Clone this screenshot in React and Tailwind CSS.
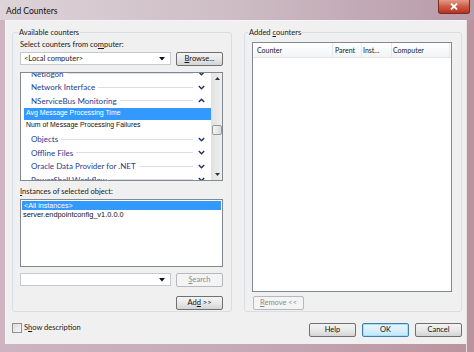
import React from 'react';

const Chevron = ({ up }) => (
  <svg width="7" height="5" viewBox="0 0 7 5" className="shrink-0">
    <path d={up ? 'M0.8 4 L3.5 1.3 L6.2 4' : 'M0.8 1 L3.5 3.7 L6.2 1'} fill="none" stroke="#1e2f6e" strokeWidth="1.4" />
  </svg>
);

const Button = ({ children, className = '', disabled, primary }) => (
  <div
    className={`h-[14px] flex items-center justify-center rounded-[2px] border text-[7.5px] ${
      disabled
        ? 'border-[#b5b9bd] bg-[#f4f4f4] text-[#8a8a8a]'
        : primary
        ? 'border-[#3c7fb1] bg-linear-to-b from-[#eaf6fd] via-[#d9effa] to-[#bee6fd] text-[#111] shadow-[inset_0_0_0_1px_#a6dcf7]'
        : 'border-[#707070] bg-linear-to-b from-[#f3f3f3] via-[#e9e9e9] to-[#d4d4d4] text-[#111]'
    } ${className}`}
  >
    <span className="whitespace-pre">{children}</span>
  </div>
);

const Category = ({ label, up }) => (
  <div className="h-[13.5px] flex items-center pl-[10px] pr-[6px] text-[8px] text-[#1f3b8f]">
    <span className="whitespace-nowrap">{label}</span>
    <div className="flex-1 h-px bg-[#d9e0ea] ml-[3px] mr-[5px]" />
    <Chevron up={up} />
  </div>
);

const Counter = ({ label, selected }) => (
  <div
    className={`h-[12px] flex items-center ml-[3px] pl-[2px] text-[6.9px] font-['Liberation_Sans',sans-serif] whitespace-nowrap ${
      selected ? 'bg-[#3399ff] text-white' : 'text-[#111]'
    }`}
  >
    {label}
  </div>
);

const Combo = ({ children, className = '' }) => (
  <div className={`flex items-center bg-white border border-[#c5c8cc] pl-[3px] pr-[5px] ${className}`}>
    <span className="flex-1 text-[7.5px] text-[#222] whitespace-nowrap">{children}</span>
    <svg width="6" height="4" viewBox="0 0 6 4"><path d="M0 0 H6 L3 3.5 Z" fill="#111" /></svg>
  </div>
);

export default function App() {
  return (
    <div className="w-[474px] h-[352px] overflow-hidden flex flex-col bg-linear-to-r from-[#cdb4c0] via-[#c6a9b7] to-[#b9949f] font-['Lato',sans-serif] text-[#1a1a1a]">
      {/* Title bar */}
      <div className="h-[20px] flex items-start bg-linear-to-r from-[#ddd3d8] via-[#cdbcc4] to-[#b89aa8]">
        <span className="text-[8.5px] ml-[6px] mt-[5px] text-[#111]">Add Counters</span>
        <div className="ml-auto mr-[4px] w-[32px] h-[14px] rounded-b-[3px] border border-t-0 border-[#7a2b22] bg-linear-to-b from-[#e29a8a] via-[#cf5a44] to-[#b7301d] flex items-center justify-center">
          <svg width="8" height="7" viewBox="0 0 8 7"><path d="M1 0.5 L7 6.5 M7 0.5 L1 6.5" stroke="#fff" strokeWidth="1.8" /></svg>
        </div>
      </div>

      <div className="flex flex-1">
        <div className="w-[5px]" />
        {/* Client area */}
        <div className="w-[461px] h-[324px] bg-[#f0f0f0] flex flex-col border-l border-t border-[#f8f4f6]">
          <div className="flex pl-[6px] pt-[11px]">
            {/* Available counters */}
            <div className="relative w-[220px] h-[280px] border border-[#d5dfe5] rounded-[3px] pl-[7px] pt-[7px]">
              <span className="absolute left-[5px] -top-[6px] px-[1px] bg-[#f0f0f0] text-[7.5px] leading-[11px]">Available counters</span>
              <div className="text-[7.5px] leading-[10px] h-[10px]">Select counters from co<u>m</u>puter:</div>
              <div className="flex items-start mt-[2px] h-[14px]">
                <Combo className="w-[151px] h-[13px]">&lt;Local computer&gt;</Combo>
                <Button className="w-[47px] ml-[5px]"><u>B</u>rowse...</Button>
              </div>
              <div className="mt-[6px] w-[203px] h-[109px] bg-white border border-[#828790] flex overflow-hidden">
                <div className="flex-1 overflow-hidden">
                  <div className="-mt-[6px]">
                    <Category label="Netlogon" />
                    <Category label="Network Interface" />
                    <Category label="NServiceBus Monitoring" up />
                    <Counter label="Avg Message Processing Time" selected />
                    <Counter label="Num of Message Processing Failures" />
                    <div className="h-[1px]" />
                    <Category label="Objects" />
                    <Category label="Offline Files" />
                    <Category label="Oracle Data Provider for .NET" />
                    <Category label="PowerShell Workflow" />
                  </div>
                </div>
                <div className="w-[11px] bg-linear-to-r from-[#e3e3e3] to-[#efefef] border-l border-[#e0e0e0] flex flex-col items-center">
                  <div className="h-[11px] flex items-center justify-center">
                    <svg width="5" height="3" viewBox="0 0 5 3"><path d="M0 3 L2.5 0 L5 3 Z" fill="#333" /></svg>
                  </div>
                  <div className="mt-[41px] w-[10px] h-[10px] rounded-[2px] border border-[#979797] bg-linear-to-r from-[#f4f4f4] to-[#dcdcdc]" />
                  <div className="flex-1" />
                  <div className="h-[11px] flex items-center justify-center">
                    <svg width="5" height="3" viewBox="0 0 5 3"><path d="M0 0 L5 0 L2.5 3 Z" fill="#333" /></svg>
                  </div>
                </div>
              </div>
              <div className="mt-[6px] text-[7.5px] leading-[10px] h-[10px]"><u>I</u>nstances of selected object:</div>
              <div className="mt-[2px] w-[203px] h-[68px] bg-white border border-[#828790] pt-[1px] pl-[1px] pr-[1px]">
                <div className="h-[9px] bg-[#3399ff] text-white text-[7.2px] leading-[9px] pl-[2px] font-['Liberation_Sans',sans-serif]">&lt;All instances&gt;</div>
                <div className="h-[10px] text-[7.4px] leading-[10px] pl-[1px] font-['Liberation_Sans',sans-serif] text-[#111]">server.endpointconfig_v1.0.0.0</div>
              </div>
              <div className="flex items-start mt-[6px]">
                <Combo className="w-[151px] h-[13px]" />
                <Button disabled className="w-[47px] ml-[5px]"><u>S</u>earch</Button>
              </div>
              <div className="flex mt-[9px]">
                <Button className="w-[47px] ml-[156px]">Ad<u>d</u> &gt;&gt;</Button>
              </div>
            </div>

            {/* Added counters */}
            <div className="relative ml-[12px] w-[218px] h-[280px] border border-[#d5dfe5] rounded-[3px] pl-[7px] pt-[9px]">
              <span className="absolute left-[3px] -top-[6px] px-[1px] bg-[#f0f0f0] text-[7.5px] leading-[11px]">Added <u>c</u>ounters</span>
              <div className="w-[200px] h-[250px] bg-white border border-[#828790]">
                <div className="h-[15px] flex items-center text-[7px] bg-linear-to-b from-white to-[#f3f4f6] border-b border-[#e5e5e5]">
                  <div className="w-[80px] pl-[4px] border-r border-[#e8e8e8] h-full flex items-center">Counter</div>
                  <div className="w-[29px] pl-[2px] border-r border-[#e8e8e8] h-full flex items-center">Parent</div>
                  <div className="w-[30px] pl-[1px] border-r border-[#e8e8e8] h-full flex items-center">Inst...</div>
                  <div className="w-[58px] pl-[1px] border-r border-[#e8e8e8] h-full flex items-center">Computer</div>
                </div>
              </div>
              <Button disabled className="w-[51px] ml-[1px] mt-[4px]"><u>R</u>emove &lt;&lt;</Button>
            </div>
          </div>

          {/* Bottom row */}
          <div className="flex items-start pl-[6px] pr-[4px] mt-[11px]">
            <div className="flex items-center">
              <div className="w-[10px] h-[10px] border border-[#8e8f8f] bg-linear-to-br from-[#dcdcdc] to-[#f7f7f7]" />
              <span className="ml-[2px] text-[7.5px] leading-[10px]">S<u>h</u>ow description</span>
            </div>
            <div className="ml-auto flex gap-[6px]">
              <Button className="w-[47px]">Help</Button>
              <Button primary className="w-[47px]">OK</Button>
              <Button className="w-[47px]">Cancel</Button>
            </div>
          </div>
        </div>
        <div className="flex-1 border-l border-[#e8dde2]" />
      </div>
    </div>
  );
}
